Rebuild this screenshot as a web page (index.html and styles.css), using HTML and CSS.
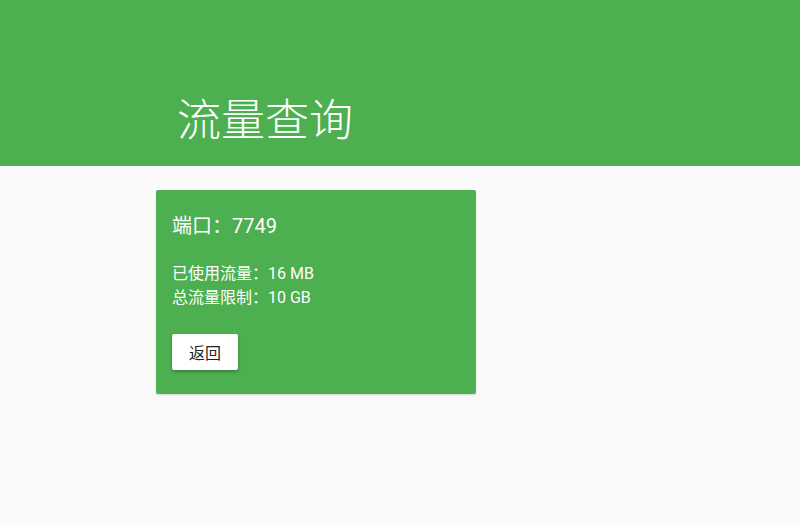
FILE: index.html
```html
<!DOCTYPE html>
<html lang="zh-CN">
<head>
<meta charset="utf-8">
<title>流量查询</title>
<link rel="stylesheet" href="styles.css">
</head>
<body>
<header class="header">
  <h1 class="title">流量查询</h1>
</header>
<main class="main">
  <div class="card">
    <div class="card-title">端口：7749</div>
    <p class="line">已使用流量：16 MB</p>
    <p class="line">总流量限制：10 GB</p>
    <button class="btn">返回</button>
  </div>
</main>
</body>
</html>
```
FILE: styles.css
```css
html, body {
  margin: 0;
  padding: 0;
}
body {
  background: #fafafa;
  font-family: Roboto, "Noto Sans CJK SC", sans-serif;
  width: 800px;
  height: 525px;
  overflow: hidden;
}
.header {
  background: #4caf50;
  height: 166px;
  box-sizing: border-box;
  padding: 84px 0 0 177px;
}
.title {
  margin: 0;
  font-family: "Noto Sans CJK SC", sans-serif;
  font-weight: 300;
  font-size: 44px;
  line-height: 66px;
  color: #fff;
}
.main {
  padding: 24px 0 0 156px;
}
.card {
  width: 320px;
  box-sizing: border-box;
  background: #4caf50;
  border-radius: 2px;
  box-shadow: 0 1px 2px rgba(0,0,0,0.15);
  padding: 20px 16px 24px;
  color: #fff;
}
.card-title {
  font-size: 20px;
  line-height: 32px;
  margin-bottom: 20px;
}
.line {
  margin: 0;
  font-size: 16px;
  line-height: 24px;
}
.btn {
  margin-top: 24px;
  display: block;
  height: 36px;
  padding: 0 17px;
  border: none;
  border-radius: 2px;
  background: #fff;
  color: #222;
  font-family: Roboto, "Noto Sans CJK SC", sans-serif;
  font-size: 16px;
  box-shadow: 0 2px 3px rgba(0,0,0,0.25);
}
```
